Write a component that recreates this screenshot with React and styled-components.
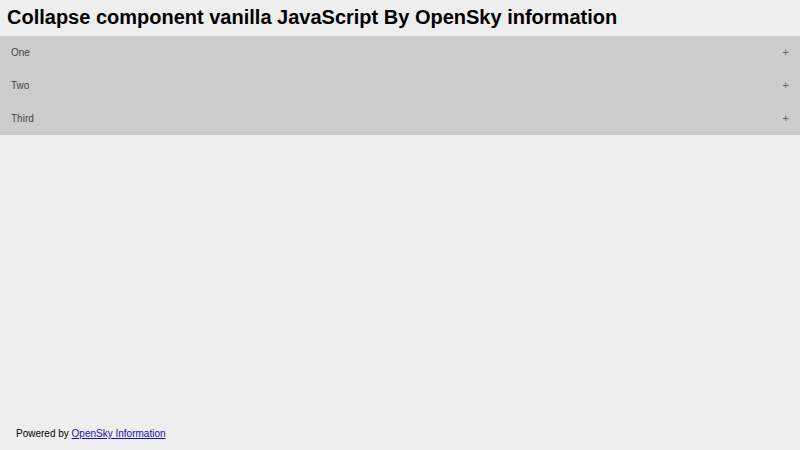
import React from 'react';
import styled, { createGlobalStyle } from 'styled-components';

const GlobalStyle = createGlobalStyle`
    html, body {
        margin: 0;
        padding: 0;
        background: #eeeeee;
        font-family: "Liberation Sans", Arial, sans-serif;
    }
`;

const Page = styled.div`
    display: flex;
    flex-direction: column;
    min-height: 100vh;
`;

const Title = styled.h1`
    margin: 0;
    padding: 5px 7px 6px;
    font-size: 20px;
    line-height: 25px;
    font-weight: bold;
    color: #000;
`;

const Collapse = styled.div`
    background: #cccccc;
`;

const Row = styled.div`
    display: flex;
    justify-content: space-between;
    align-items: center;
    height: 33px;
    padding: 0 11px;
    font-size: 10px;
    color: #444;
    cursor: pointer;
    border-bottom: 1px solid ${props => (props.last ? '#c6c6c6' : 'transparent')};
    box-sizing: border-box;
`;

const Sign = styled.span`
    color: #666;
    font-size: 11px;
    margin-right: 0;
`;

const Footer = styled.footer`
    margin-top: auto;
    padding: 0 16px 9px;
    font-size: 10px;
    line-height: 14px;
    color: #000;

    a {
        color: #1a0dab;
    }
`;

const items = ['One', 'Two', 'Third'];

const App = () => {
    return (
        <Page>
            <GlobalStyle />
            <Title>Collapse component vanilla JavaScript By OpenSky information</Title>
            <Collapse>
                {items.map((label, i) => (
                    <Row key={label} last={i === items.length - 1 ? 1 : 0}>
                        <span>{label}</span>
                        <Sign>+</Sign>
                    </Row>
                ))}
            </Collapse>
            <Footer>
                Powered by <a href="#">OpenSky Information</a>
            </Footer>
        </Page>
    );
};

export default App;
